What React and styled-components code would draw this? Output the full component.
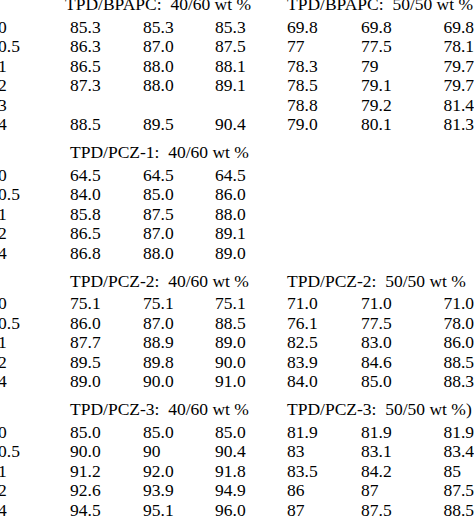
import React from "react";
import styled, { createGlobalStyle } from "styled-components";

const GlobalStyle = createGlobalStyle`
  html, body {
    margin: 0;
    padding: 0;
    background: #ffffff;
    overflow: hidden;
  }
  body {
    font-family: "Liberation Serif", "Times New Roman", serif;
    color: #000;
  }
`;

const Table = styled.div`
  margin: -6px 0 0 -2px;
  display: flex;
  flex-direction: column;
  gap: 7.5px;
  font-size: 17.5px;
`;

const Section = styled.div`
  display: grid;
  grid-template-columns: 72px 73px 72px 72px 74px 1fr;
`;

const Header = styled.div`
  grid-column: ${({ side }) => (side === "right" ? "5 / span 3" : "2 / span 3")};
  margin-left: ${({ shift }) => shift || 0}px;
  line-height: 21.5px;
  padding-bottom: 2px;
  white-space: pre;
`;

const Corner = styled.div`
  grid-column: 1;
`;

const Cell = styled.div`
  line-height: 19.5px;
  white-space: pre;
`;

const sections = [
  {
    left: "TPD/BPAPC:  40/60 wt %",
    right: "TPD/BPAPC:  50/50 wt %",
    shift: -5,
    rows: [
      ["0", "85.3", "85.3", "85.3", "69.8", "69.8", "69.8"],
      ["0.5", "86.3", "87.0", "87.5", "77", "77.5", "78.1"],
      ["1", "86.5", "88.0", "88.1", "78.3", "79", "79.7"],
      ["2", "87.3", "88.0", "89.1", "78.5", "79.1", "79.7"],
      ["3", "", "", "", "78.8", "79.2", "81.4"],
      ["4", "88.5", "89.5", "90.4", "79.0", "80.1", "81.3"],
    ],
  },
  {
    left: "TPD/PCZ-1:  40/60 wt %",
    right: "",
    rows: [
      ["0", "64.5", "64.5", "64.5"],
      ["0.5", "84.0", "85.0", "86.0"],
      ["1", "85.8", "87.5", "88.0"],
      ["2", "86.5", "87.0", "89.1"],
      ["4", "86.8", "88.0", "89.0"],
    ],
  },
  {
    left: "TPD/PCZ-2:  40/60 wt %",
    right: "TPD/PCZ-2:  50/50 wt %",
    rows: [
      ["0", "75.1", "75.1", "75.1", "71.0", "71.0", "71.0"],
      ["0.5", "86.0", "87.0", "88.5", "76.1", "77.5", "78.0"],
      ["1", "87.7", "88.9", "89.0", "82.5", "83.0", "86.0"],
      ["2", "89.5", "89.8", "90.0", "83.9", "84.6", "88.5"],
      ["4", "89.0", "90.0", "91.0", "84.0", "85.0", "88.3"],
    ],
  },
  {
    left: "TPD/PCZ-3:  40/60 wt %",
    right: "TPD/PCZ-3:  50/50 wt %)",
    rows: [
      ["0", "85.0", "85.0", "85.0", "81.9", "81.9", "81.9"],
      ["0.5", "90.0", "90", "90.4", "83", "83.1", "83.4"],
      ["1", "91.2", "92.0", "91.8", "83.5", "84.2", "85"],
      ["2", "92.6", "93.9", "94.9", "86", "87", "87.5"],
      ["4", "94.5", "95.1", "96.0", "87", "87.5", "88.5"],
    ],
  },
];

export default function App() {
  return (
    <>
      <GlobalStyle />
      <Table>
        {sections.map((sec, i) => (
          <Section key={i}>
            <Corner />
            <Header shift={sec.shift}>{sec.left}</Header>
            <Header side="right">{sec.right}</Header>
            {sec.rows.map((row) =>
              Array.from({ length: 7 }, (_, j) => (
                <Cell key={row[0] + "-" + j}>{row[j] || ""}</Cell>
              ))
            )}
          </Section>
        ))}
      </Table>
    </>
  );
}
